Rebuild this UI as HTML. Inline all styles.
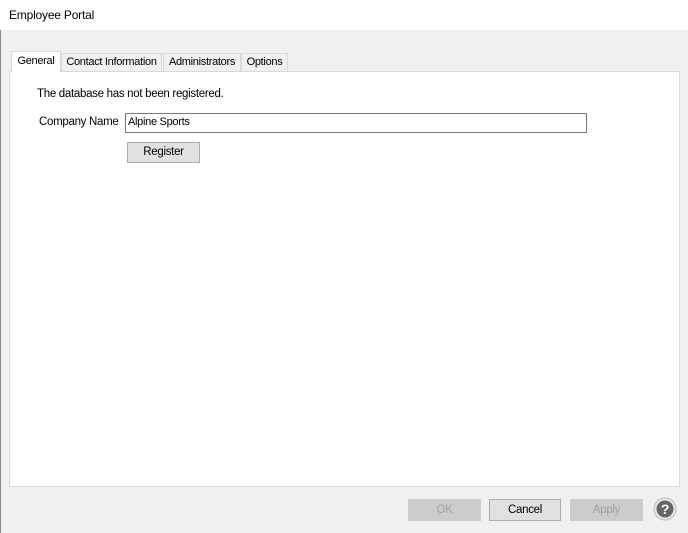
<!DOCTYPE html><html><head><style>
body{margin:0;width:688px;height:533px;background:#f0f0f0;font-family:"Liberation Sans",sans-serif;font-size:11.5px;letter-spacing:-0.3px;position:relative;overflow:hidden;color:#000}
div{position:absolute;box-sizing:border-box}
.t{height:18px;top:53px;border:1px solid #d9d9d9;border-bottom:none;background:#f0f0f0;text-align:center;line-height:17px;font-size:11px}
.b{top:499px;height:22px;width:73px;text-align:center;line-height:20px;border:1px solid #cccccc;background:#cccccc;color:#a0a0a0}
</style></head><body>
<div style="left:0;top:0;width:688px;height:30px;background:#fff"></div>
<div style="left:9px;top:8px;font-size:12px;letter-spacing:-0.2px">Employee Portal</div>
<div style="left:0;top:30px;width:1px;height:503px;background:#888"></div>
<div style="left:9px;top:71px;width:671px;height:416px;background:#fff;border:1px solid #d9d9d9"></div>
<div class="t" style="left:61px;width:101px">Contact Information</div>
<div class="t" style="left:163px;width:78px">Administrators</div>
<div class="t" style="left:241px;width:47px">Options</div>
<div class="t" style="left:11px;top:51px;height:21px;width:50px;background:#fff;line-height:18px">General</div>
<div style="left:37px;top:88px">The database has not been registered.</div>
<div style="left:39px;top:116px">Company Name</div>
<div style="left:125px;top:113px;width:462px;height:20px;border:1px solid #7a7a7a;padding-left:2px;line-height:17px;font-size:11px">Alpine Sports</div>
<div style="left:127px;top:142px;width:73px;height:21px;border:1px solid #adadad;background:#e1e1e1;text-align:center;line-height:19px">Register</div>
<div class="b" style="left:408px">OK</div>
<div class="b" style="left:489px;width:72px;border-color:#adadad;background:#e1e1e1;color:#000">Cancel</div>
<div class="b" style="left:570px">Apply</div>
<svg style="position:absolute;left:653px;top:497px" width="24" height="24"><circle cx="12" cy="12" r="11" fill="#e8e8e8" stroke="#bbb"/><circle cx="12" cy="12" r="8.5" fill="#666"/><text x="12" y="17" text-anchor="middle" font-family="Liberation Sans" font-weight="bold" font-size="14" fill="#fff">?</text></svg>
</body></html>
